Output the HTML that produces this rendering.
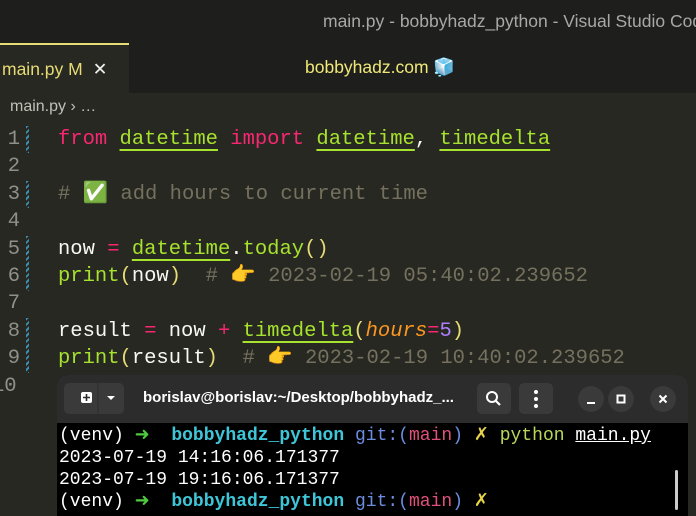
<!DOCTYPE html>
<html style="width:696px;height:516px;overflow:hidden"><head><meta charset="utf-8"><style>
*{margin:0;padding:0;box-sizing:border-box}
body{width:696px;height:516px;overflow:hidden;background:#272822;font-family:"Liberation Sans",sans-serif;position:relative}
.title{position:absolute;left:0;top:0;width:696px;height:43px;background:#1e1f1c;color:#a8a8a8;font-size:17.5px;line-height:43px;overflow:hidden}
.title span{position:absolute;left:323px;white-space:nowrap}
.tabs{position:absolute;left:0;top:43px;width:696px;height:50px;background:#1e1f1c}
.tab{position:absolute;left:0;top:0;width:129px;height:50px;background:#272822;border-top:2px solid #e6db74;color:#e6db74;font-size:17.5px;line-height:48px;padding-left:2px}
.tab .x{color:#eee;margin-left:10px}
.brand{position:absolute;left:305px;top:0;line-height:48px;color:#f0e878;font-size:17.5px}
.crumb{position:absolute;left:10px;top:98px;color:#c0c0b8;font-size:16px}
.code{position:absolute;left:0;top:126px;font-family:"Liberation Mono",monospace;font-size:20.5px;line-height:27.4px;color:#f8f8f2;white-space:pre}
.ln{position:absolute;left:0;width:20px;color:#90908a;text-align:right}
.mk{position:absolute;left:26px;width:3px;height:27px;background:repeating-linear-gradient(135deg,#3c8fb0 0 2px,#272822 2px 4px)}
.tx{position:absolute;left:58px}
.k{color:#f92672}.g{color:#a6e22e}.u{text-decoration:underline;text-decoration-color:#a6e22e;text-underline-offset:5px;text-decoration-thickness:2px}
.c{color:#75715e}.p{color:#e6db74}.o{color:#fd971f;font-style:italic}.n{color:#ae81ff}
.term{position:absolute;left:57px;top:375px;width:631px;height:141px;background:#000;border-radius:10px 10px 0 0;overflow:hidden}
.th{height:48px;background:#2c2c2c;position:relative;color:#fff;font-size:15px;font-weight:bold}
.btn{position:absolute;top:8px;height:31px;background:#3a3a3a;border-radius:5px}
.cb{position:absolute;top:11px;width:26px;height:26px;border-radius:50%;background:#3a3a3a}
.tb{font-family:"Liberation Mono",monospace;font-size:18px;line-height:22px;color:#fff;padding-left:2px;padding-top:2px;white-space:pre}
.cy{color:#3ec6d8;font-weight:bold}.bl{color:#6d8de0}.rd{color:#e0517a}.gr{color:#4ecb3f}.ye{color:#e6d34a}.lg{color:#b9d85a}
</style></head><body>
<div class="title"><span>main.py - bobbyhadz_python - Visual Studio Code</span></div>
<div class="tabs">
<div class="tab">main.py M<span class="x">✕</span></div>
<div class="brand">bobbyhadz.com 🧊</div>
</div>
<div class="crumb">main.py › …</div>
<div class="code">
<div class="ln" style="top:0">1</div><div class="mk" style="top:0"></div>
<div class="tx" style="top:0"><span class="k">from</span> <span class="g u">datetime</span> <span class="k">import</span> <span class="g u">datetime</span>, <span class="g u">timedelta</span></div>
<div class="ln" style="top:27.4px">2</div>
<div class="ln" style="top:54.8px">3</div><div class="mk" style="top:54.8px"></div>
<div class="tx c" style="top:54.8px"># ✅ add hours to current time</div>
<div class="ln" style="top:82.2px">4</div>
<div class="ln" style="top:109.6px">5</div><div class="mk" style="top:109.6px;height:55px"></div>
<div class="tx" style="top:109.6px">now <span class="k">=</span> <span class="g u">datetime</span>.<span class="g">today</span><span class="p">()</span></div>
<div class="ln" style="top:137px">6</div>
<div class="tx" style="top:137px"><span class="g">print</span><span class="p">(</span>now<span class="p">)</span>  <span class="c"># 👉 2023-02-19 05:40:02.239652</span></div>
<div class="ln" style="top:164.4px">7</div>
<div class="ln" style="top:191.8px">8</div><div class="mk" style="top:191.8px;height:55px"></div>
<div class="tx" style="top:191.8px">result <span class="k">=</span> now <span class="k">+</span> <span class="g u">timedelta</span><span class="p">(</span><span class="o">hours</span><span class="k">=</span><span class="n">5</span><span class="p">)</span></div>
<div class="ln" style="top:219.2px">9</div>
<div class="tx" style="top:219.2px"><span class="g">print</span><span class="p">(</span>result<span class="p">)</span>  <span class="c"># 👉 2023-02-19 10:40:02.239652</span></div>
<div class="ln" style="top:246.6px;left:-8px">10</div>
</div>
<div class="term">
<div class="th">
<div class="btn" style="left:7px;width:60px"><svg width="60" height="31"><rect x="17" y="9" width="11" height="11" rx="2" fill="#fff"/><path d="M22.5 11v7M19 14.5h7" stroke="#2c2c2c" stroke-width="1.6"/><line x1="34" y1="0" x2="34" y2="31" stroke="#2c2c2c"/><path d="M43 13h8l-4 4z" fill="#fff"/></svg></div>
<div style="position:absolute;left:86px;top:14px">borislav@borislav:~/Desktop/bobbyhadz_...</div>
<div class="btn" style="left:420px;width:34px"><svg width="34" height="31"><circle cx="15" cy="14" r="5" stroke="#fff" stroke-width="2" fill="none"/><path d="M19 18l4 4" stroke="#fff" stroke-width="2.2"/></svg></div>
<div class="btn" style="left:462px;width:34px"><svg width="34" height="31"><circle cx="17" cy="9" r="2" fill="#fff"/><circle cx="17" cy="16" r="2" fill="#fff"/><circle cx="17" cy="23" r="2" fill="#fff"/></svg></div>
<div class="cb" style="left:521px"><svg width="26" height="26"><path d="M9 17h8" stroke="#fff" stroke-width="2"/></svg></div>
<div class="cb" style="left:551px"><svg width="26" height="26"><rect x="9.5" y="9.5" width="7" height="7" stroke="#fff" stroke-width="2" fill="none"/></svg></div>
<div class="cb" style="left:593px"><svg width="26" height="26"><path d="M9.5 9.5l7 7M16.5 9.5l-7 7" stroke="#fff" stroke-width="2"/></svg></div>
</div>
<div class="tb">(venv) <span class="gr">➜</span>  <span class="cy">bobbyhadz_python</span> <span class="bl">git:(</span><span class="rd">main</span><span class="bl">)</span> <span class="ye">✗</span> <span class="lg">python</span> <span style="text-decoration:underline">main.py</span>
2023-07-19 14:16:06.171377
2023-07-19 19:16:06.171377
(venv) <span class="gr">➜</span>  <span class="cy">bobbyhadz_python</span> <span class="bl">git:(</span><span class="rd">main</span><span class="bl">)</span> <span class="ye">✗</span></div>
<div style="position:absolute;right:10px;top:95px;width:3px;height:40px;background:#ccc;border-radius:2px"></div>
</div>
</body></html>
